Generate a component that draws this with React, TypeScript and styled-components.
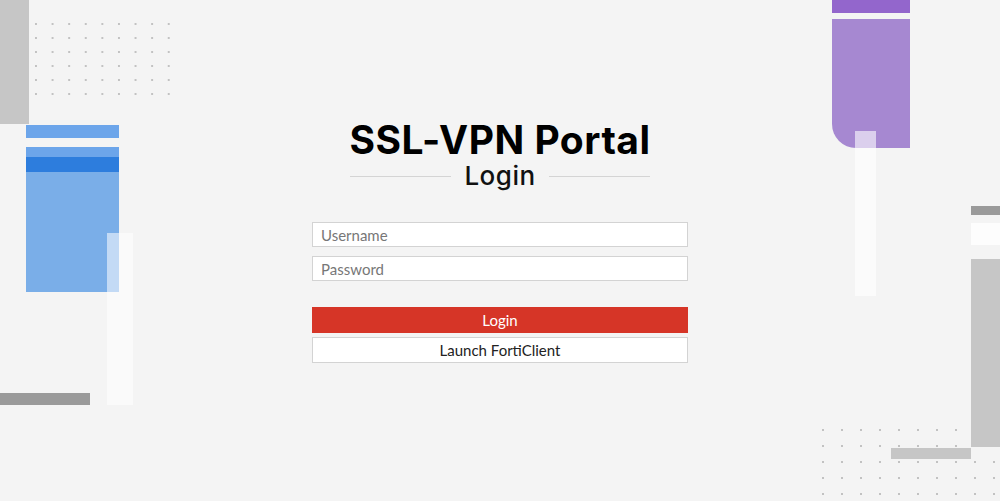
import React from "react";
import styled, { createGlobalStyle } from "styled-components";

const Global = createGlobalStyle`
  html, body { margin: 0; padding: 0; background: #f4f4f4; }
  body { width: 1000px; height: 501px; overflow: hidden; }
  #root { width: 1000px; height: 501px; }
`;

const Page = styled.div`
  position: relative;
  width: 1000px;
  height: 501px;
  background: #f4f4f4;
  overflow: hidden;
`;

/* free-canvas decoration clusters */
const Cluster = styled.div<{ $x: number; $y: number; $z?: number }>`
  position: absolute;
  left: ${(p) => p.$x}px;
  top: ${(p) => p.$y}px;
  display: flex;
  flex-direction: column;
  z-index: ${(p) => p.$z || 0};
`;

const Bar = styled.div<{ $w: number; $h: number; $c: string; $r?: string; $mt?: number }>`
  width: ${(p) => p.$w}px;
  height: ${(p) => p.$h}px;
  margin-top: ${(p) => p.$mt || 0}px;
  background: ${(p) => p.$c};
  border-radius: ${(p) => p.$r || "0"};
  flex: none;
`;

const Dots = styled.div<{ $w: number; $h: number; $sx: number; $sy: number }>`
  width: ${(p) => p.$w}px;
  height: ${(p) => p.$h}px;
  background-image: radial-gradient(circle at 1px 1px, #c2c2c2 1px, transparent 1.4px);
  background-size: ${(p) => p.$sx}px ${(p) => p.$sy}px;
`;

const Content = styled.main`
  position: relative;
  z-index: 5;
  display: flex;
  flex-direction: column;
  align-items: center;
  padding-top: 117px;
`;

const Title = styled.h1`
  margin: 0;
  font-family: Inter, "Noto Sans", sans-serif;
  font-weight: 700;
  font-size: 39px;
  line-height: 46px;
  color: #000;
  letter-spacing: 0.5px;
`;

const SubRow = styled.div`
  display: flex;
  align-items: center;
  gap: 13px;
  width: 300px;
  margin-top: -3px;
`;

const Rule = styled.span`
  flex: 1;
  height: 1px;
  background: #d4d4d4;
`;

const Sub = styled.h2`
  margin: 0;
  font-family: Inter, "Noto Sans", sans-serif;
  font-weight: 500;
  font-size: 26px;
  line-height: 32px;
  color: #111;
  letter-spacing: 0.5px;
`;

const Form = styled.form`
  display: flex;
  flex-direction: column;
  width: 376px;
  margin-top: 30px;
`;

const Input = styled.input`
  box-sizing: border-box;
  width: 100%;
  height: 25px;
  margin: 0 0 9px;
  padding: 0 8px;
  border: 1px solid #d3d3d3;
  background: #fff;
  font-family: Lato, "Open Sans", sans-serif;
  font-size: 15px;
  color: #333;
  outline: none;
  &::placeholder { color: #777; }
`;

const Button = styled.button<{ $primary?: boolean }>`
  box-sizing: border-box;
  width: 100%;
  height: 26px;
  margin: ${(p) => (p.$primary ? "17px 0 4px" : "0")};
  padding: 0;
  border: 1px solid ${(p) => (p.$primary ? "#d63527" : "#d3d3d3")};
  background: ${(p) => (p.$primary ? "#d63527" : "#fff")};
  color: ${(p) => (p.$primary ? "#fff" : "#222")};
  font-family: Lato, "Open Sans", sans-serif;
  font-size: 15px;
  line-height: 24px;
  cursor: pointer;
`;

export default function App() {
  return (
    <Page>
      <Global />
      {/* top-left */}
      <Cluster $x={0} $y={0}>
        <Bar $w={29} $h={124} $c="#c6c6c6" />
      </Cluster>
      <Cluster $x={35} $y={23}>
        <Dots $w={145} $h={84} $sx={16.6} $sy={14} />
      </Cluster>
      <Cluster $x={26} $y={125}>
        <Bar $w={93} $h={13} $c="#6ca5ea" />
        <Bar $w={93} $h={10} $c="#6ca5ea" $mt={9} />
        <Bar $w={93} $h={15} $c="#2d7ddd" />
        <Bar $w={93} $h={120} $c="#7aaee8" />
      </Cluster>
      <Cluster $x={107} $y={233} $z={1}>
        <Bar $w={26} $h={172} $c="rgba(255,255,255,0.55)" />
      </Cluster>
      <Cluster $x={0} $y={393}>
        <Bar $w={90} $h={12} $c="#9a9a9a" />
      </Cluster>
      {/* top-right */}
      <Cluster $x={832} $y={0}>
        <Bar $w={78} $h={13} $c="#9366cc" />
        <Bar $w={78} $h={129} $c="#a688d1" $r="0 0 0 24px" $mt={6} />
      </Cluster>
      <Cluster $x={855} $y={131} $z={1}>
        <Bar $w={21} $h={165} $c="rgba(255,255,255,0.6)" />
      </Cluster>
      <Cluster $x={971} $y={206} $z={1}>
        <Bar $w={29} $h={9} $c="#9a9a9a" />
        <Bar $w={29} $h={22} $c="#fdfdfd" $mt={8} />
        <Bar $w={29} $h={188} $c="#c6c6c6" $mt={14} />
      </Cluster>
      {/* bottom-right */}
      <Cluster $x={822} $y={429}>
        <Dots $w={180} $h={80} $sx={19} $sy={16} />
      </Cluster>
      <Cluster $x={891} $y={448} $z={1}>
        <Bar $w={80} $h={11} $c="#c6c6c6" />
      </Cluster>

      <Content>
        <Title>SSL-VPN Portal</Title>
        <SubRow>
          <Rule />
          <Sub>Login</Sub>
          <Rule />
        </SubRow>
        <Form onSubmit={(e) => e.preventDefault()}>
          <Input placeholder="Username" />
          <Input type="password" placeholder="Password" />
          <Button $primary type="submit">Login</Button>
          <Button type="button">Launch FortiClient</Button>
        </Form>
      </Content>
    </Page>
  );
}
